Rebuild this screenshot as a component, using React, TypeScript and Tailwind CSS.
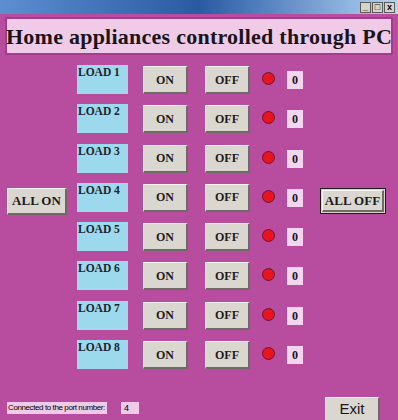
import React from "react";

const loads = [1, 2, 3, 4, 5, 6, 7, 8];

const serif = { fontFamily: '"Liberation Serif", "Times New Roman", serif' };
const sans = { fontFamily: '"Liberation Sans", Arial, sans-serif' };

function Btn({ label, className }: { label: string; className?: string }) {
  return (
    <div
      className={
        "flex items-center justify-center bg-[#d9d7cf] border-t border-l border-t-[#f4f3ee] border-l-[#f4f3ee] border-b-2 border-r-2 border-b-[#6e6a66] border-r-[#6e6a66] font-bold text-[12px] text-[#1d1a1c] " +
        (className ?? "")
      }
    >
      {label}
    </div>
  );
}

export default function App() {
  return (
    <div className="w-[398px] h-[420px] overflow-hidden bg-[#b84d9f] flex flex-col" style={serif}>
      {/* title bar */}
      <div className="h-[14px] shrink-0 flex items-center justify-end pr-[3px] bg-gradient-to-r from-[#5d8fd0] via-[#2a5aa4] to-[#b3d4f2]">
        <div className="flex gap-[1px]">
          {["_", "□", "x"].map((c) => (
            <div
              key={c}
              className="w-[11px] h-[11px] bg-[#d6d3ca] border border-[#5a5a5a] flex items-center justify-center text-[9px] leading-none font-bold text-black"
              style={sans}
            >
              {c}
            </div>
          ))}
        </div>
      </div>

      <div className="flex-1 flex flex-col px-[5px] pt-[3px]">
        <div className="h-[38px] bg-[#efcbe8] border-2 border-[#a63c8c] flex items-center justify-center">
          <span className="font-bold text-[22px] tracking-[0.25px] text-[#1b1418] whitespace-nowrap">
            Home appliances controlled through PC
          </span>
        </div>

        <div className="flex mt-[10px]">
          <div className="w-[72px] pl-[2px] pt-[123px]">
            <Btn label="ALL ON" className="w-[60px] h-[27px] text-[13px]" />
          </div>

          <div className="flex flex-col gap-[10.3px]">
            {loads.map((n) => (
              <div key={n} className="flex items-start h-[29px]">
                <div className="w-[51px] h-[29px] bg-[#9cd9ec] font-bold text-[11.5px] leading-none pt-[2px] pl-[1px] text-[#1c2430]">
                  LOAD {n}
                </div>
                <Btn label="ON" className="ml-[15px] mt-[1px] w-[45px] h-[28px]" />
                <Btn label="OFF" className="ml-[17px] mt-[1px] w-[45px] h-[28px]" />
                <div className="ml-[12px] mt-[7px] w-[13px] h-[13px] rounded-full bg-[#e8141e] border border-[#6b1530]" />
                <div className="ml-[12px] mt-[6px] w-[16px] h-[18px] bg-[#f2d6ee] flex items-center justify-center font-bold text-[12px] text-[#1b1418]">
                  0
                </div>
              </div>
            ))}
          </div>

          <div className="pl-[17px] pt-[123px]">
            <div className="border border-[#1e1a1c] bg-[#d9d7cf] p-[1px]">
              <Btn label="ALL OFF" className="w-[62px] h-[22px] text-[13px]" />
            </div>
          </div>
        </div>

        <div className="flex items-end mt-auto">
          <div
            className="ml-[2px] mb-[6px] h-[12px] w-[100px] bg-[#efcbe8] text-[8px] leading-none flex items-center pl-[1px] text-black tracking-[-0.4px] whitespace-nowrap"
            style={sans}
          >
            Connected to the port number:
          </div>
          <div
            className="ml-[14px] mb-[6px] h-[12px] w-[18px] bg-[#efcbe8] text-[9px] leading-none flex items-center pl-[3px] text-black"
            style={sans}
          >
            4
          </div>
          <div
            className="ml-auto mr-[13px] w-[55px] h-[24px] -mb-[1px] bg-[#d9d7cf] border-t border-l border-[#f4f3ee] border-r-2 border-r-[#6e6a66] flex items-center justify-center text-[15px] text-[#1b1418]"
            style={sans}
          >
            Exit
          </div>
        </div>
      </div>
    </div>
  );
}
